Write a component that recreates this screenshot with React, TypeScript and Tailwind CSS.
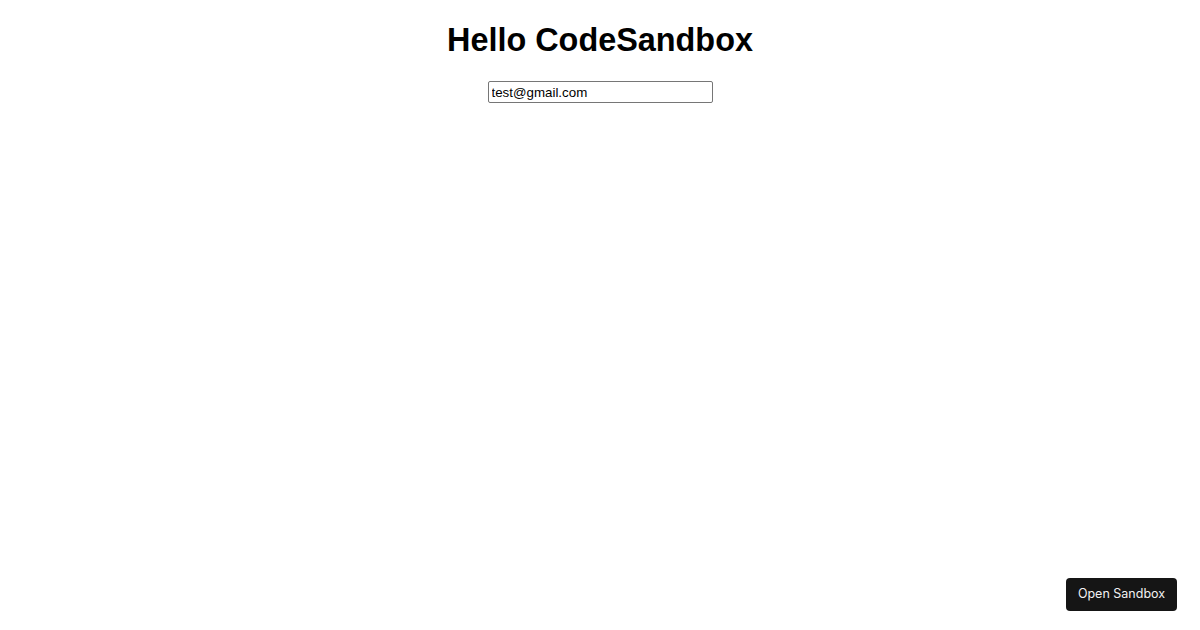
import { useState } from "react";

export default function App() {
  const [email, setEmail] = useState("test@gmail.com");

  return (
    <div className="min-h-[630px] bg-white font-['Liberation_Sans',Arial,sans-serif] text-black">
      <div className="flex flex-col items-center pt-[22px]">
        <h1 className="text-[32.4px] font-bold leading-[37px]">Hello CodeSandbox</h1>
        <input
          type="email"
          value={email}
          onChange={(e) => setEmail(e.target.value)}
          className="mt-[22px] h-[22px] w-[225px] rounded-[2px] border border-[#767676] px-[3px] py-[1px] text-[13.33px] leading-[16px] text-black outline-none"
        />
      </div>

      <a
        href="#"
        className="fixed bottom-[19px] right-[23px] flex h-[33px] w-[111px] items-center justify-center rounded-[4px] bg-[#151515] font-['Inter',sans-serif] text-[12.5px] text-[#f2f2f2]"
      >
        Open Sandbox
      </a>
    </div>
  );
}
